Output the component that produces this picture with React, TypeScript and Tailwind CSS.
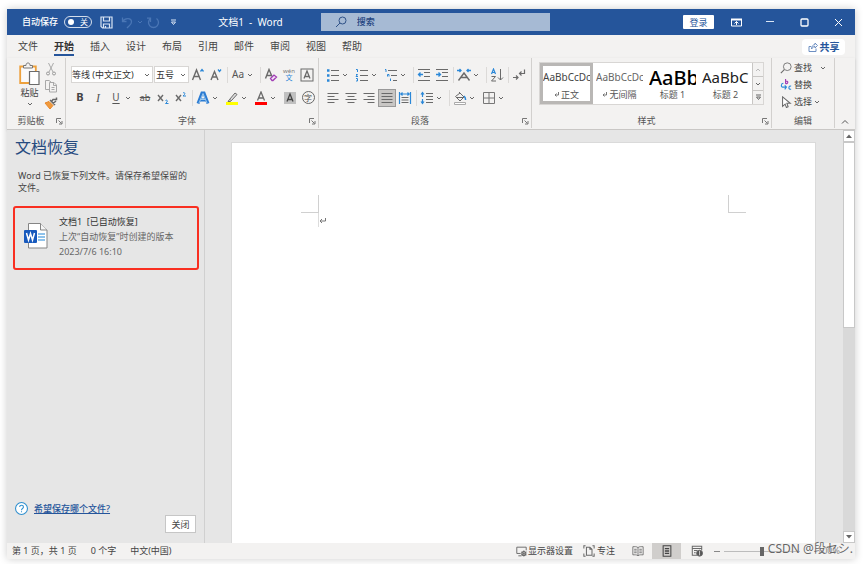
import type { ReactNode } from 'react';

const tabs = ['文件', '开始', '插入', '设计', '布局', '引用', '邮件', '审阅', '视图', '帮助'];

const styleTiles = [
  { name: '正文', sample: 'AaBbCcDc', mark: true, font: 'text-[10px] text-[#444]' },
  { name: '无间隔', sample: 'AaBbCcDc', mark: true, font: 'text-[10px] text-[#666]' },
  { name: '标题 1', sample: 'AaBb', mark: false, font: 'text-[20px] font-medium text-black' },
  { name: '标题 2', sample: 'AaBbC', mark: false, font: 'text-[15px] text-[#222]' },
];

function Icon({ size = 14, children }: { size?: number; children: ReactNode }) {
  return (
    <svg width={size} height={size} viewBox="0 0 14 14" fill="none" stroke="#6a6a6a" strokeWidth="1" className="shrink-0">
      {children}
    </svg>
  );
}

function Chevron({ color = '#666' }: { color?: string }) {
  return (
    <svg width="6" height="6" viewBox="0 0 6 6" fill="none" stroke={color} className="shrink-0">
      <path d="M1 2l2 2 2-2" />
    </svg>
  );
}

function Tool({ label, menu, active, children }: { label: string; menu?: boolean; active?: boolean; children: ReactNode }) {
  return (
    <div className="flex items-center">
      <button
        type="button"
        aria-label={label}
        className={`flex h-[18px] w-[18px] items-center justify-center ${active ? 'border border-[#999] bg-[#c8c6c4]' : ''}`}
      >
        {children}
      </button>
      {menu && (
        <button type="button" aria-label={`${label}选项`} className="flex h-[18px] w-[11px] items-center">
          <Chevron />
        </button>
      )}
    </div>
  );
}

function Divider() {
  return (
    <div className="flex w-1 justify-center">
      <div className="h-4 w-px bg-[#dcdad8]" />
    </div>
  );
}

function Row({ children }: { children: ReactNode }) {
  return <div className="flex h-[23px] items-center">{children}</div>;
}

function Group({ title, launcher = true, className = '', children }: { title: string; launcher?: boolean; className?: string; children: ReactNode }) {
  return (
    <section className={`flex flex-col justify-between border-r border-[#d2d0ce] ${className}`}>
      {children}
      <div className="flex h-[14px] items-center text-[9px] text-[#555]">
        <span className="flex-1 text-center">{title}</span>
        {launcher && (
          <button type="button" aria-label={`${title}设置`} className="w-2.5">
            <svg width="8" height="8" viewBox="0 0 8 8" fill="none" stroke="#777">
              <path d="M1.500 6V1.500H6M3.500 3.500l3 3M7 4v3H4" />
            </svg>
          </button>
        )}
      </div>
    </section>
  );
}

function TitleBar() {
  return (
    <header className="flex h-[26px] shrink-0 items-center bg-[#25559b] text-[9px] text-white">
      <div className="flex w-[37%] items-center pl-[15px]">
        <label htmlFor="autosave" className="font-medium">自动保存</label>
        <input id="autosave" type="checkbox" className="peer sr-only" />
        <label htmlFor="autosave" className="ml-1.5 flex h-3 w-7 items-center justify-between rounded-full border border-white/80 px-[3px] text-[8px] leading-none">
          <span className="h-1.5 w-1.5 rounded-full bg-white" />
          <span>关</span>
        </label>
        <button type="button" aria-label="保存" className="ml-2">
          <svg width="13" height="13" viewBox="0 0 13 13" fill="none" stroke="#dbe6f5" strokeWidth="1.200">
            <path d="M1 1h11v11H2.500L1 10.500zM3.500 1v4h6V1M3.500 12V8h6v4M5.500 10v2" />
          </svg>
        </button>
        <button type="button" aria-label="撤消" className="ml-2 flex items-center gap-1">
          <svg width="12" height="13" viewBox="0 0 12 13" fill="none" stroke="#4a76b5" strokeWidth="1.300">
            <path d="M1.500 1.500v4h4M1.500 5.500C4 1.500 10.500 1.500 10.500 6c0 3-3 4-4.500 6" />
          </svg>
          <Chevron color="#4a76b5" />
        </button>
        <button type="button" aria-label="重复" className="ml-1">
          <svg width="13" height="13" viewBox="0 0 13 13" fill="none" stroke="#4a76b5" strokeWidth="1.300">
            <path d="M9.500 2.500A5 5 0 1 1 3.500 2.500M0 2.200h3.500V6" />
          </svg>
        </button>
        <button type="button" aria-label="自定义快速访问工具栏" className="ml-2.5">
          <svg width="7" height="7" viewBox="0 0 7 7" fill="none" stroke="#dbe6f5">
            <path d="M1 1h5M1.500 3h4L3.500 5.500z" />
          </svg>
        </button>
        <span className="ml-auto mr-[38px] whitespace-pre text-[10px]">文档1  -  Word</span>
      </div>
      <label htmlFor="search" className="flex h-[18px] w-[27%] items-center bg-[#a6bad4] pl-3.5">
        <svg width="12" height="12" viewBox="0 0 12 12" fill="none" stroke="#2f5288">
          <circle cx="7.500" cy="4.500" r="3.500" />
          <path d="M5 7L1 11" />
        </svg>
        <input
          id="search"
          type="text"
          aria-label="搜索"
          placeholder="搜索"
          className="ml-2.5 min-w-0 flex-1 bg-transparent text-[9px] font-medium outline-none placeholder:text-[#1f4480]"
        />
      </label>
      <div className="flex flex-1 items-center justify-end">
        <button type="button" className="mr-[5px] h-[14px] w-[31px] rounded-[1px] bg-white text-[9px] leading-none text-[#25559b]">登录</button>
        <button type="button" aria-label="功能区显示选项" className="flex w-[34px] justify-center">
          <svg width="11" height="9" viewBox="0 0 11 9" fill="none" stroke="#fff">
            <path d="M.5 1.500v6.500h10V1.500z" />
            <path d="M0 1.500h11" strokeWidth="2" />
            <path d="M5.500 7V3.500M3.500 5.500l2-2 2 2" />
          </svg>
        </button>
        <button type="button" aria-label="最小化" className="flex w-[34px] justify-center">
          <svg width="8" height="8" viewBox="0 0 8 8" stroke="#dbe6f5"><path d="M0 3.500h8" /></svg>
        </button>
        <button type="button" aria-label="最大化" className="flex w-[34px] justify-center">
          <svg width="9" height="9" viewBox="0 0 9 9" fill="none" stroke="#fff" strokeWidth="1.300"><rect x="1" y="1" width="7" height="7" rx="1" /></svg>
        </button>
        <button type="button" aria-label="关闭窗口" className="flex w-[34px] justify-center">
          <svg width="9" height="9" viewBox="0 0 9 9" stroke="#fff"><path d="M1 1l7 7M8 1L1 8" /></svg>
        </button>
      </div>
    </header>
  );
}

function TabBar() {
  return (
    <nav className="flex h-[23px] shrink-0 items-center pl-[3px] pr-2.5">
      {tabs.map((tab) => (
        <button key={tab} type="button" className="flex h-full flex-col items-center px-2 pt-1 text-[10px] leading-[14px] text-[#444]">
          <span className={tab === '开始' ? 'border-b-2 border-[#25559b] pb-px font-bold text-[#333]' : ''}>{tab}</span>
        </button>
      ))}
      <button type="button" className="ml-auto flex h-4 w-[43px] items-center justify-center gap-0.5 rounded-sm bg-white text-[10px] font-bold leading-none text-[#25559b]">
        <svg width="10" height="10" viewBox="0 0 10 10" fill="none" stroke="#6d8fc2">
          <path d="M3 4.500H1v5h7V6.500M3.500 7c0-2.500 1-4 3.500-4.500V1l2.500 2.500L7 6V4.500C5.500 4.500 4.500 5.500 3.500 7z" />
        </svg>
        共享
      </button>
    </nav>
  );
}

function ClipboardGroup() {
  return (
    <Group title="剪贴板" className="w-[59px]">
      <div className="flex justify-between pl-3 pr-[7px]">
        <button type="button" className="flex flex-col items-center pt-1 text-[9px] leading-[13px] text-[#444]">
          <svg width="21" height="24" viewBox="0 0 21 24" fill="none">
            <path d="M1.200 4.500h15.600V21H1.200z" fill="#fafafa" stroke="#eda13d" strokeWidth="1.800" />
            <path d="M4.500 6V3.500H7C7 1.500 8 1 9 1s2 .5 2 2.500h2.500V6z" fill="#f3f2f1" stroke="#777" />
            <path d="M10.500 9.500h9.500v13h-9.500z" fill="#fff" stroke="#6b6b6b" strokeWidth="1.200" />
          </svg>
          粘贴
          <span className="mt-0.5"><Chevron /></span>
        </button>
        <div className="flex flex-col pt-0.5">
          <button type="button" aria-label="剪切" className="flex h-[17px] items-center">
            <Icon><path d="M4.500 1l4.500 9M9.500 1L5 10" stroke="#aaa" /><circle cx="4" cy="11.500" r="1.500" stroke="#999" /><circle cx="10" cy="11.500" r="1.500" stroke="#999" /></Icon>
          </button>
          <button type="button" aria-label="复制" className="flex h-[17px] items-center">
            <Icon><path d="M5 10.500H1.500v-9H5L7 3M5.500 3.500H10L12.500 6v7h-7zM9.500 3.500v3h3M7.500 8.500h3M7.500 10.500h3" stroke="#a8a8a8" /></Icon>
          </button>
          <button type="button" aria-label="格式刷" className="flex h-[17px] items-center">
            <Icon>
              <path d="M1 7l4-1.500 4 4L6 13z" fill="#f09a3c" stroke="#e8872a" />
              <path d="M6 4l5 5M7.500 5.500L9 3.500h3.500V1.500M9 7.500l3-2.500" stroke="#666" strokeWidth="1.500" />
            </Icon>
          </button>
        </div>
      </div>
    </Group>
  );
}

function FontGroup() {
  return (
    <Group title="字体" className="w-[253px] pt-[5px]">
      <div className="pl-[5px]">
        <Row>
          <div className="relative mr-px flex h-[17px] w-[82px] items-center border border-[#d8d6d4] bg-white">
            <select aria-label="字体名称" className="h-full w-full appearance-none text-[9px] leading-none text-[#333] outline-none">
              <option>等线 (中文正文)</option>
            </select>
            <span className="pointer-events-none absolute right-0.5"><Chevron /></span>
          </div>
          <div className="relative flex h-[17px] w-[35px] items-center border border-[#d8d6d4] bg-white">
            <select aria-label="字号" className="h-full w-full appearance-none pl-px text-[9px] leading-none text-[#333] outline-none">
              <option>五号</option>
            </select>
            <span className="pointer-events-none absolute right-0.5"><Chevron /></span>
          </div>
          <Tool label="增大字号">
            <Icon><path d="M1.500 12L5.500 2l4 10M3 8.500h5" strokeWidth="1.400" /><path d="M9.500 3.500l1.500-2 1.500 2" stroke="#2b88d8" strokeWidth="1.300" /></Icon>
          </Tool>
          <Tool label="减小字号">
            <Icon><path d="M2 12l3.500-8.500L9 12M3.500 9h4" strokeWidth="1.400" /><path d="M9 1.500l1.500 2 1.500-2" stroke="#2b88d8" strokeWidth="1.300" /></Icon>
          </Tool>
          <Divider />
          <Tool label="更改大小写" menu><span className="text-[10px] text-[#555]">Aa</span></Tool>
          <Divider />
          <Tool label="清除格式">
            <Icon><path d="M1.500 10.500L5 1.500l3 7M3 7.500h4" strokeWidth="1.400" /><path d="M6.500 10.500l3.500-3.500 2.500 2-3.500 3.500H8z" fill="#f3e3f6" stroke="#a13db5" strokeWidth="1.300" /></Icon>
          </Tool>
          <Tool label="拼音指南">
            <span className="flex flex-col items-center text-[6px] leading-[6px] text-[#777]"><span>wén</span><span className="text-[7px] leading-[8px] text-[#2b88d8]">文</span></span>
          </Tool>
          <Tool label="字符边框">
            <Icon><rect x="1" y="1" width="12" height="12" /><path d="M4 10.500L7 3l3 7.500M5 8.500h4" strokeWidth="1.300" /></Icon>
          </Tool>
        </Row>
        <Row>
          <Tool label="加粗"><span className="text-[11px] font-bold text-[#444]">B</span></Tool>
          <Tool label="倾斜"><span className="font-['Liberation_Serif',serif] text-[12px] italic text-[#555]">I</span></Tool>
          <Tool label="下划线" menu><span className="text-[10px] text-[#555] underline underline-offset-2">U</span></Tool>
          <Tool label="删除线"><span className="text-[9px] text-[#555] line-through">ab</span></Tool>
          <Tool label="下标">
            <Icon><path d="M2 4l5 6M7 4l-5 6" strokeWidth="1.400" /><path d="M9.500 9.500c1-1 2.500 0 1.500 1.500L9.500 12.500h3" stroke="#2b88d8" /></Icon>
          </Tool>
          <Tool label="上标">
            <Icon><path d="M2 4l5 6M7 4l-5 6" strokeWidth="1.400" /><path d="M9 2c1-1 2.500 0 1.500 1.500L9 5h3" stroke="#2b88d8" /></Icon>
          </Tool>
          <Divider />
          <Tool label="文本效果" menu>
            <Icon><path d="M2 12.500L6 2h2l4 10.500M4.500 9h5" stroke="#2b7cd3" strokeWidth="3" /><path d="M3 12L7 2.500 11 12M5 8.500h4" stroke="#9cc8ee" /></Icon>
          </Tool>
          <Tool label="突出显示" menu>
            <Icon><path d="M4.500 8.500L10 2l2 1.500-5.500 6zM4.500 8.500l-1.500 2h2.500l1-1" fill="#ddd" /><path d="M1 12.500h12" stroke="#ffff00" strokeWidth="3" /></Icon>
          </Tool>
          <Tool label="字体颜色" menu>
            <Icon><path d="M3.500 9.500L7 1l3.500 8.500M5 7h4" strokeWidth="1.300" /><path d="M1 12.500h12" stroke="#ff0000" strokeWidth="3" /></Icon>
          </Tool>
          <Tool label="字符底纹">
            <Icon><rect x="1" y="1" width="12" height="12" fill="#c0c0c0" stroke="none" /><path d="M4 10.500L7 3l3 7.500M5 8.500h4" stroke="#444" strokeWidth="1.300" /></Icon>
          </Tool>
          <Tool label="带圈字符">
            <span className="flex h-[13px] w-[13px] items-center justify-center rounded-full border border-[#666] text-[8px] leading-none text-[#555]">字</span>
          </Tool>
        </Row>
      </div>
    </Group>
  );
}

function ParagraphGroup() {
  return (
    <Group title="段落" className="w-[213px] pt-[5px]">
      <div className="pl-[5px]">
        <Row>
          <Tool label="项目符号" menu>
            <Icon><path d="M5 2.500h8M5 7.500h8M5 12.500h8" /><path d="M1 2.500h2.500M1 7.500h2.500M1 12.500h2.500" stroke="#2b88d8" strokeWidth="2.500" /></Icon>
          </Tool>
          <Tool label="编号" menu>
            <Icon><path d="M5 2.500h8M5 7.500h8M5 12.500h8" /><path d="M1 1.500h1.500v2.500M1 6.500h1.500L1 8.500h2M1 10.500h1.500v2.500H1" stroke="#2b88d8" /></Icon>
          </Tool>
          <Tool label="多级列表" menu>
            <Icon><path d="M4 2.500h9M7 7.500h6M9 12.500h4" /><path d="M1 1.500h1v2.500M3.500 8.500v-2h1.500v2M6.500 10.500v2.500" stroke="#2b88d8" /></Icon>
          </Tool>
          <Divider />
          <Tool label="减少缩进量">
            <Icon><path d="M1 1.500h12M7 4.500h6M7 8.500h6M1 12.500h12" /><path d="M6 6.500H1.500M3.500 4.500l-2 2 2 2" stroke="#2b88d8" strokeWidth="1.300" /></Icon>
          </Tool>
          <Tool label="增加缩进量">
            <Icon><path d="M1 1.500h12M7 4.500h6M7 8.500h6M1 12.500h12" /><path d="M1 6.500h4.500M3.500 4.500l2 2-2 2" stroke="#2b88d8" strokeWidth="1.300" /></Icon>
          </Tool>
          <Divider />
          <Tool label="中文版式" menu>
            <Icon><path d="M1.500 12.500L7 5l5.500 7.500M4 9.500h6" strokeWidth="1.400" /><path d="M0 2.500h4M2.500 1L4 2.500 2.500 4M14 2.500h-4M11.500 1L10 2.500 11.500 4" stroke="#2b88d8" strokeWidth="1.300" /></Icon>
          </Tool>
          <Divider />
          <Tool label="排序">
            <Icon><path d="M1.500 6l2-5 2 5M2.300 4.500h2.500" stroke="#2b88d8" strokeWidth="1.200" /><path d="M1.500 8.500h4l-4 4.500h4.500M10.500 1v11M8 9.500l2.500 2.500L13 9.500" /></Icon>
          </Tool>
          <Divider />
          <Tool label="显示编辑标记">
            <Icon><path d="M12.500 1.500v4H7.500M9.500 3.500l-2 2 2 2M1 9.500h5M4 7.500l2 2-2 2" strokeWidth="1.200" /></Icon>
          </Tool>
        </Row>
        <Row>
          <Tool label="左对齐"><Icon><path d="M1.500 2.500h11M1.500 5.500h7M1.500 8.500h11M1.500 11.500h7" /></Icon></Tool>
          <Tool label="居中"><Icon><path d="M1.500 2.500h11M3.500 5.500h7M1.500 8.500h11M3.500 11.500h7" /></Icon></Tool>
          <Tool label="右对齐"><Icon><path d="M1.500 2.500h11M5.500 5.500h7M1.500 8.500h11M5.500 11.500h7" /></Icon></Tool>
          <Tool label="两端对齐" active><Icon><path d="M1.500 2.500h11M1.500 5.500h11M1.500 8.500h11M1.500 11.500h11" /></Icon></Tool>
          <Tool label="分散对齐">
            <Icon><path d="M3.500 6.500h7M3.500 9h7M3.500 11.500h7" /><path d="M1.500 1v12M12.500 1v12M2 3h10M4.500 1.500L3 3l1.500 1.500M9.500 1.500L11 3 9.500 4.500" stroke="#2b88d8" strokeWidth="1.200" /></Icon>
          </Tool>
          <Divider />
          <Tool label="行距" menu>
            <Icon><path d="M6 2.500h7M6 5.500h7M6 8.500h7M6 11.500h7" /><path d="M2.500 1.500v4.500M1 3.500l1.500-2L4 3.500M2.500 8v4.500M1 10.500l1.500 2 1.500-2" stroke="#2b88d8" strokeWidth="1.200" /></Icon>
          </Tool>
          <Divider />
          <Tool label="底纹" menu>
            <Icon><path d="M6 1l5 5-4 4-4.500-4.500L7 2M3 6.500h7" /><path d="M11 5c2 2 1.500 3 1.500 4" stroke="#2b88d8" strokeWidth="1.500" /><path d="M1.500 11.500h11v2h-11z" fill="#fff" stroke="#aaa" /></Icon>
          </Tool>
          <Tool label="边框" menu>
            <Icon><path d="M1.500 1.500h11v11h-11zM7 1.500v11M1.500 7h11" stroke="#777" /></Icon>
          </Tool>
        </Row>
      </div>
    </Group>
  );
}

function StylesGroup() {
  return (
    <Group title="样式" className="min-w-0 flex-1 pt-1">
      <div className="mx-[7px] flex h-[43px] border border-[#d8d6d4] bg-white">
        {styleTiles.map((tile, i) => (
          <button
            key={tile.name}
            type="button"
            className={`flex min-w-0 flex-1 flex-col overflow-hidden border-[3px] text-[9px] leading-[13px] text-[#555] ${i === 0 ? 'border-[#b9b7b5]' : 'border-transparent'}`}
          >
            <span className={`flex h-[23px] w-full items-center overflow-hidden whitespace-nowrap ${tile.font}`}>{tile.sample}</span>
            <span className="flex w-full items-center justify-center gap-0.5 whitespace-nowrap">
              {tile.mark && (
                <svg width="5" height="5" viewBox="0 0 5 5" fill="none" stroke="#777"><path d="M4.500 0v3H1M2.500 1.500L1 3l1.500 1.500" /></svg>
              )}
              {tile.name}
            </span>
          </button>
        ))}
        <div className="flex w-[11px] flex-col divide-y divide-[#c8c6c4] border-l border-[#c8c6c4] bg-[#f3f2f1]">
          <button type="button" aria-label="上一行样式" className="flex flex-1 items-center justify-center">
            <svg width="6" height="6" viewBox="0 0 6 6" fill="none" stroke="#bbb"><path d="M1 4l2-2 2 2" /></svg>
          </button>
          <button type="button" aria-label="下一行样式" className="flex flex-1 items-center justify-center"><Chevron /></button>
          <button type="button" aria-label="其他样式" className="flex flex-1 items-center justify-center">
            <svg width="7" height="7" viewBox="0 0 7 7" fill="none" stroke="#666"><path d="M1 1h5M1.500 3h4L3.500 5.500z" /></svg>
          </button>
        </div>
      </div>
    </Group>
  );
}

function EditingGroup() {
  return (
    <Group title="编辑" launcher={false} className="w-[63px] pt-px">
      <div className="flex flex-col pl-2 text-[9px] text-[#444]">
        <button type="button" className="flex h-[17px] items-center gap-0.5">
          <Icon size={12}><circle cx="8.500" cy="5.500" r="4.500" /><path d="M5 9l-4 4" strokeWidth="1.300" /></Icon>
          查找
          <span className="ml-1.5"><Chevron /></span>
        </button>
        <button type="button" className="flex h-[17px] items-center gap-0.5">
          <Icon size={12}>
            <path d="M6.500 0v5.500M6.500 3c3-1.500 4 2.500 0 2.500" stroke="#a13db5" strokeWidth="1.300" />
            <path d="M4 5C1 5 1 9.500 3 9.500h4M5.500 7.500l2 2-2 2.500M13 8.500c-3-1.500-4 4 0 3.500" stroke="#2b88d8" strokeWidth="1.300" />
          </Icon>
          替换
        </button>
        <button type="button" className="flex h-[17px] items-center gap-0.5">
          <Icon size={12}><path d="M3 1v11l3-2.500 1.500 4 2-1L8 8.500h4z" fill="#fff" strokeWidth="1.200" /></Icon>
          选择
          <Chevron />
        </button>
      </div>
    </Group>
  );
}

function Ribbon() {
  return (
    <div className="flex h-[72px] shrink-0 border-b border-[#c9c7c5] pb-px shadow-sm">
      <ClipboardGroup />
      <FontGroup />
      <ParagraphGroup />
      <StylesGroup />
      <EditingGroup />
      <div className="flex w-5 items-end justify-center pb-0.5">
        <button type="button" aria-label="折叠功能区">
          <svg width="8" height="8" viewBox="0 0 8 8" fill="none" stroke="#555"><path d="M1 5.500l3-3 3 3" /></svg>
        </button>
      </div>
    </div>
  );
}

function RecoveryPane() {
  return (
    <aside className="flex w-[198px] shrink-0 flex-col border-r border-[#d0d0d0] pl-1.5 pr-[5px] text-[9px] text-[#444]">
      <h2 className="mt-1.5 pl-0.5 text-[16px] leading-[22px] text-[#264b80]">文档恢复</h2>
      <p className="mt-3 pl-[5px] pr-2.5 leading-[12px]">Word 已恢复下列文件。请保存希望保留的文件。</p>
      <button type="button" className="mt-3 flex h-16 items-start rounded-[3px] border-2 border-[#f92f21] pl-[9px] pt-1.5 text-left">
        <svg width="25" height="28" viewBox="0 0 25 28" fill="none" className="mt-2">
          <path d="M4.500 1.500h12l6.500 6.500v18h-18.500z" fill="#fff" stroke="#858585" />
          <path d="M16.500 1.500v6.500h6.500" fill="#f5f5f5" stroke="#858585" />
          <path d="M14 12h7M14 15h7M14 18h7" stroke="#69afe5" strokeWidth="1.500" />
          <rect x="0" y="8" width="13" height="13" rx="1" fill="#185abd" />
          <path d="M2.500 11l2 7 2-6.500 2 6.500 2-7" stroke="#fff" strokeWidth="1.500" />
        </svg>
        <span className="ml-2.5 flex flex-col whitespace-pre leading-[15px] text-[#666]">
          <span className="text-[#333]">文档1  [已自动恢复]</span>
          <span>上次“自动恢复”时创建的版本</span>
          <span>2023/7/6 16:10</span>
        </span>
      </button>
      <div className="mt-auto flex items-center gap-1.5 pl-0.5">
        <svg width="13" height="13" viewBox="0 0 12 12" fill="none" stroke="#2f8fce">
          <circle cx="6" cy="6" r="5.500" fill="#fff" />
          <path d="M4.300 4.700c0-2.200 3.500-2.200 3.500 0C7.800 6 6 6 6 7.500M6 8.500v1" />
        </svg>
        <a href="#help" className="font-medium text-[#25559b] underline">希望保存哪个文件?</a>
      </div>
      <button type="button" className="mb-2.5 mr-[3px] h-[18px] w-[31px] self-end border border-[#c6c6c6] bg-white leading-none">关闭</button>
    </aside>
  );
}

function DocumentArea() {
  return (
    <main className="flex min-w-0 flex-1">
      <div className="flex min-w-0 flex-1 pl-[26px] pr-[27px] pt-3">
        <article className="flex-1 border border-b-0 border-[#dadada] bg-white px-[69px] pt-[52px]">
          <div className="flex justify-between">
            <div className="h-[18px] w-[18px] border-b border-r border-[#d0d0d0]" />
            <div className="h-[18px] w-[18px] border-b border-l border-[#d0d0d0]" />
          </div>
          <div className="ml-[17px] flex h-[14px] items-center border-l border-[#dcdcdc]">
            <svg width="7" height="7" viewBox="0 0 7 7" fill="none" stroke="#777"><path d="M6.500 1v3H1M3 2L1 4l2 2" /></svg>
          </div>
        </article>
      </div>
      <div className="flex w-3 flex-col bg-[#d9d9d9]">
        <button type="button" aria-label="向上滚动" className="flex h-3 items-center justify-center border border-[#c8c8c8] bg-white">
          <svg width="6" height="4" viewBox="0 0 6 4" fill="#666"><path d="M0 4l3-3.500L6 4z" /></svg>
        </button>
        <div className="h-[45%] border border-[#c8c8c8] bg-white" />
        <button type="button" aria-label="向下滚动" className="mt-auto flex h-3 items-center justify-center border border-[#c8c8c8] bg-white">
          <svg width="6" height="4" viewBox="0 0 6 4" fill="#666"><path d="M0 0l3 3.500L6 0z" /></svg>
        </button>
      </div>
    </main>
  );
}

function StatusBar() {
  return (
    <footer className="flex h-4 shrink-0 items-center pl-[5px] pr-[15px] text-[9px] text-[#444]">
      <span>第 1 页，共 1 页</span>
      <span className="ml-3.5">0 个字</span>
      <span className="ml-3.5">中文(中国)</span>
      <button type="button" className="ml-auto flex items-center gap-px">
        <Icon size={11}><path d="M6 9.500H1v-8h12v4M3 12.500h4" strokeWidth="1.200" /><circle cx="10" cy="9.500" r="2.500" strokeWidth="1.500" /><path d="M10 5.500v8M6.500 7.500l7 4M6.500 11.500l7-4" /></Icon>
        显示器设置
      </button>
      <button type="button" className="ml-2.5 flex items-center gap-0.5">
        <Icon size={12}><path d="M4 2.500h4L10.500 5v7H4zM8 2.500V5h2.500M1 4V1h2M11 1h2v3M1 10v3h2M13 10v3h-2" strokeWidth="1.200" /></Icon>
        专注
      </button>
      <button type="button" aria-label="阅读视图" className="ml-2 flex h-4 w-[29px] items-center justify-center">
        <Icon size={12}><path d="M7 3C5 1.500 3 2 1 2v9.500c2 0 4-.5 6 1 2-1.500 4-1 6-1V2c-2 0-4-.5-6 1zM7 3v9.500M2.500 5h3M2.500 7h3M2.500 9h3M8.500 5h3M8.500 7h3M8.500 9h3" /></Icon>
      </button>
      <button type="button" aria-label="页面视图" className="flex h-4 w-[29px] items-center justify-center bg-[#d0cecc]">
        <Icon size={12}><path d="M2.500 1h9v12h-9zM4.500 4h5M4.500 6h5M4.500 8h5M4.500 10h5" stroke="#444" strokeWidth="1.200" /></Icon>
      </button>
      <button type="button" aria-label="Web 版式视图" className="flex h-4 w-[31px] items-center justify-center">
        <Icon size={12}><path d="M7 12H1.500V1.500h11V6M1.500 4h11M3.500 6.500h4M3.500 9h2" strokeWidth="1.200" /><circle cx="10" cy="9.500" r="3.500" fill="#555" /><path d="M10 7v5" stroke="#ddd" /></Icon>
      </button>
      <button type="button" aria-label="缩小" className="flex w-2.5 justify-center">
        <svg width="6" height="6" viewBox="0 0 6 6" stroke="#888"><path d="M0 3.500h6" /></svg>
      </button>
      <input
        type="range"
        aria-label="显示比例"
        defaultValue={50}
        className="mx-0.5 h-2.5 w-[76px] appearance-none bg-transparent [&::-webkit-slider-runnable-track]:h-px [&::-webkit-slider-runnable-track]:bg-[#bcbcbc] [&::-webkit-slider-thumb]:-mt-1 [&::-webkit-slider-thumb]:h-[9px] [&::-webkit-slider-thumb]:w-1 [&::-webkit-slider-thumb]:appearance-none [&::-webkit-slider-thumb]:bg-[#666]"
      />
      <span className="ml-[15px] text-[#888]">100%</span>
    </footer>
  );
}

export default function App() {
  return (
    <div className="relative flex h-screen flex-col bg-white pb-[5px] pl-[7px] pr-2.5 pt-[9px] font-['Noto_Sans','Noto_Sans_CJK_SC',sans-serif]">
      <div className="flex min-h-0 flex-1 flex-col bg-[#f3f2f1] shadow-[0_0_8px_rgba(0,0,0,0.2)]">
        <TitleBar />
        <TabBar />
        <Ribbon />
        <div className="flex min-h-0 flex-1 bg-[#e6e6e6]">
          <RecoveryPane />
          <DocumentArea />
        </div>
        <StatusBar />
      </div>
      <span className="absolute bottom-1.5 right-3 text-[12px] leading-[18px] text-[#666] [text-shadow:0_0_1px_#fff]">CSDN @段セシ.</span>
    </div>
  );
}
